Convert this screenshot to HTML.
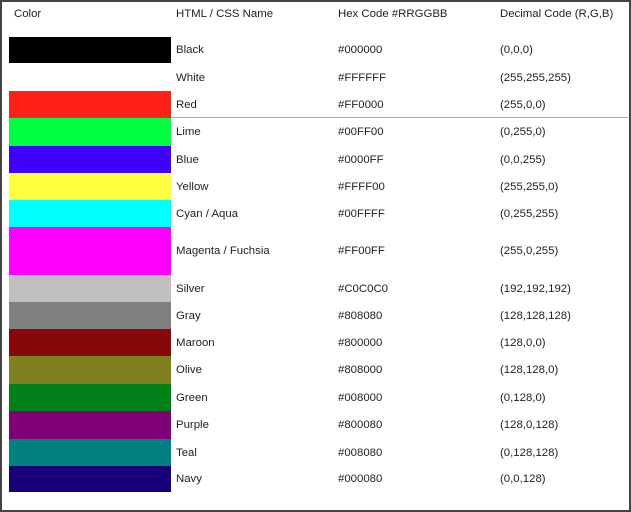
<!DOCTYPE html>
<html><head><style>
body{margin:0;width:631px;height:512px;overflow:hidden;background:#fff;font-family:"Liberation Sans",sans-serif;font-size:11.4px;color:#222}
.f{position:absolute;left:0;top:0;width:627px;height:508px;border:2px solid #444}
.s{position:absolute;left:9px;width:162px}
.t{position:absolute;white-space:nowrap;line-height:14px}
.ln{position:absolute;left:171px;top:117px;width:457px;height:1px;background:#aaa}
</style></head><body>
<div class="f"></div>
<div class="t" style="left:14px;top:7px">Color</div>
<div class="t" style="left:176px;top:7px">HTML / CSS Name</div>
<div class="t" style="left:338px;top:7px">Hex Code #RRGGBB</div>
<div class="t" style="left:500px;top:7px">Decimal Code (R,G,B)</div>
<div class="ln"></div>
<div id="rows"></div>
<script>
var d=[["#000","Black","#000000","(0,0,0)",37,26],
["#fff","White","#FFFFFF","(255,255,255)",64,27],
["#ff2018","Red","#FF0000","(255,0,0)",91,27],
["#00ff40","Lime","#00FF00","(0,255,0)",118,28],
["#4000ff","Blue","#0000FF","(0,0,255)",146,27],
["#ffff40","Yellow","#FFFF00","(255,255,0)",173,27],
["#00ffff","Cyan / Aqua","#00FFFF","(0,255,255)",200,27],
["#ff00ff","Magenta / Fuchsia","#FF00FF","(255,0,255)",227,48],
["#c0c0c0","Silver","#C0C0C0","(192,192,192)",275,27],
["#808080","Gray","#808080","(128,128,128)",302,27],
["#870808","Maroon","#800000","(128,0,0)",329,27],
["#808020","Olive","#808000","(128,128,0)",356,28],
["#008018","Green","#008000","(0,128,0)",384,27],
["#800078","Purple","#800080","(128,0,128)",411,28],
["#008080","Teal","#008080","(0,128,128)",439,27],
["#180078","Navy","#000080","(0,0,128)",466,26]];
var h="";d.forEach(function(r){var ty=r[4]+r[5]/2-7;
h+='<div class="s" style="top:'+r[4]+'px;height:'+r[5]+'px;background:'+r[0]+'"></div>'+
'<div class="t" style="left:176px;top:'+ty+'px">'+r[1]+'</div>'+
'<div class="t" style="left:338px;top:'+ty+'px">'+r[2]+'</div>'+
'<div class="t" style="left:500px;top:'+ty+'px">'+r[3]+'</div>';});
document.getElementById("rows").innerHTML=h;
</script>
</body></html>
